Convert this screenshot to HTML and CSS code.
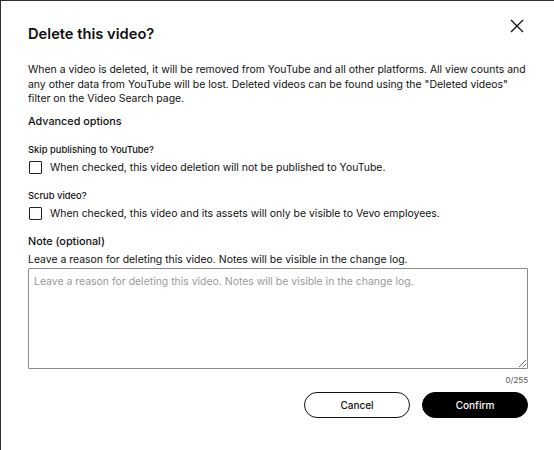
FILE: index.html
```html
<!DOCTYPE html>
<html>
<head>
<meta charset="utf-8">
<link rel="stylesheet" href="styles.css">
</head>
<body>
<div class="modal">
  <div class="header">
    <h1 class="title">Delete this video?</h1>
    <button class="close" aria-label="Close">
      <svg width="14" height="14" viewBox="0 0 14 14"><path d="M1 1L13 13M13 1L1 13" stroke="#111" stroke-width="1.3" fill="none"/></svg>
    </button>
  </div>
  <p class="desc">When a video is deleted, it will be removed from YouTube and all other platforms. All view counts and any other data from YouTube will be lost. Deleted videos can be found using the "Deleted videos" filter on the Video Search page.</p>
  <div class="section-title">Advanced options</div>
  <div class="option">
    <div class="opt-label">Skip publishing to YouTube?</div>
    <label class="check"><span class="box"></span><span>When checked, this video deletion will not be published to YouTube.</span></label>
  </div>
  <div class="option">
    <div class="opt-label">Scrub video?</div>
    <label class="check"><span class="box"></span><span>When checked, this video and its assets will only be visible to Vevo employees.</span></label>
  </div>
  <div class="section-title note">Note (optional)</div>
  <div class="hint">Leave a reason for deleting this video. Notes will be visible in the change log.</div>
  <textarea class="area" placeholder="Leave a reason for deleting this video. Notes will be visible in the change log."></textarea>
  <div class="count">0/255</div>
  <div class="actions">
    <button class="btn cancel">Cancel</button>
    <button class="btn confirm">Confirm</button>
  </div>
</div>
</body>
</html>
```
FILE: styles.css
```css
html, body { margin: 0; padding: 0; height: 100%; }
body {
  background: #2e2e2e;
  font-family: Inter, "Liberation Sans", sans-serif;
  color: #111;
}
.modal {
  margin: 1px 0 0 1px;
  background: #fff;
  height: 449px;
  box-sizing: border-box;
  padding: 18px 26px 0 27px;
  display: flex;
  flex-direction: column;
}
.header {
  display: flex;
  justify-content: space-between;
  align-items: flex-start;
}
.title {
  margin: 6px 0 0 0;
  font-size: 14.7px;
  font-weight: 600;
  line-height: 18px;
}
.close {
  border: 0;
  background: none;
  padding: 0;
  margin: 0 4px 0 0;
  width: 14px;
  height: 14px;
}
.close svg { display: block; }
.desc {
  margin: 20px 0 0 0;
  font-size: 10.45px;
  line-height: 14.5px;
}
.section-title {
  margin-top: 8px;
  font-size: 10.8px;
  font-weight: 500;
  line-height: 14px;
}
.option { margin-top: 15px; }
.option + .option { margin-top: 15px; }
.opt-label {
  font-size: 9.4px;
  font-weight: 500;
  line-height: 12px;
}
.check {
  display: flex;
  align-items: center;
  gap: 8px;
  margin-top: 5px;
  font-size: 10.45px;
  line-height: 14px;
}
.box {
  width: 11px;
  height: 11px;
  border: 1.3px solid #222;
  border-radius: 1px;
  margin-left: 1px;
  flex: none;
}
.note { margin-top: 14px; }
.hint {
  margin-top: 4px;
  font-size: 10.45px;
  line-height: 14px;
}
.area {
  margin-top: 1px;
  width: 500px;
  height: 101px;
  box-sizing: border-box;
  border: 1px solid #8a8a8a;
  border-radius: 1px;
  padding: 6px 5px;
  font-family: Inter, "Liberation Sans", sans-serif;
  font-size: 10.45px;
  line-height: 14px;
  resize: vertical;
}
.area::placeholder { color: #9a9a9a; }
.count {
  margin-top: 6px;
  width: 500px;
  text-align: right;
  font-size: 8px;
  color: #555;
  line-height: 10px;
}
.actions {
  margin-top: 7px;
  width: 500px;
  display: flex;
  justify-content: flex-end;
  gap: 12px;
}
.btn {
  width: 106px;
  height: 26px;
  border-radius: 13px;
  font-family: Inter, "Liberation Sans", sans-serif;
  font-size: 10px;
  font-weight: 500;
  cursor: pointer;
}
.cancel {
  background: #fff;
  border: 1px solid #111;
  color: #111;
}
.confirm {
  background: #000;
  border: 1px solid #000;
  color: #fff;
}
```
